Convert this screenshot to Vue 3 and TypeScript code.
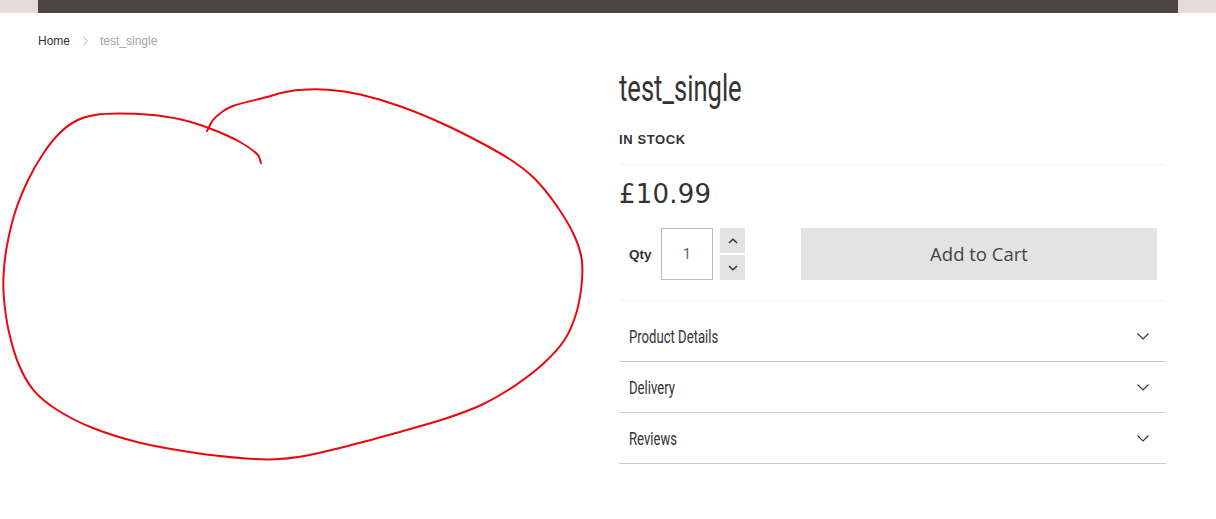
<script setup lang="ts">
type Pt = [number, number];

const accordion = ['Product Details', 'Delivery', 'Reviews'];

// hand-drawn circle, traced from the picture
const scribble: Pt[] = [
  [261, 163], [258, 155], [240, 142], [210, 127], [180, 118], [150, 114], [117, 113], [93, 114],
  [77, 119], [60, 130], [43, 152], [27, 180], [13, 213], [5, 250], [3, 280], [3, 293], [7, 330],
  [17, 367], [33, 392], [50, 408], [93, 430], [133, 443], [200, 455], [250, 459], [273, 460],
  [300, 458], [333, 450], [400, 432], [450, 418], [483, 406], [513, 388], [547, 363], [567, 340],
  [578, 315], [583, 280], [583, 257], [577, 238], [557, 203], [533, 175], [517, 163], [483, 143],
  [443, 123], [400, 105], [357, 92], [327, 89], [300, 89], [283, 92], [267, 97], [233, 106],
  [222, 112], [213, 120], [207, 131],
];

// evens out the jitter of the traced points, the two hook ends stay as they are
const relax = (pts: Pt[]): Pt[] =>
  pts.map((p, i) => {
    if (i < 3 || i > pts.length - 6) return p;
    const a = pts[i - 1];
    const b = pts[i + 1];
    return [(a[0] + 2 * p[0] + b[0]) / 4, (a[1] + 2 * p[1] + b[1]) / 4];
  });

// tangents from the neighbours, handles scaled to each segment's length
const tangent = (pts: Pt[], i: number): Pt => {
  const a = pts[Math.max(i - 1, 0)];
  const b = pts[Math.min(i + 1, pts.length - 1)];
  const len = Math.hypot(b[0] - a[0], b[1] - a[1]) || 1;
  return [(b[0] - a[0]) / len, (b[1] - a[1]) / len];
};

const smooth = (pts: Pt[]) => {
  let d = `M${pts[0][0]} ${pts[0][1]}`;
  for (let i = 0; i < pts.length - 1; i++) {
    const b = pts[i];
    const c = pts[i + 1];
    const h = Math.hypot(c[0] - b[0], c[1] - b[1]) / 3;
    const t1 = tangent(pts, i);
    const t2 = tangent(pts, i + 1);
    d += ` C${(b[0] + t1[0] * h).toFixed(1)} ${(b[1] + t1[1] * h).toFixed(1)} ${(c[0] - t2[0] * h).toFixed(1)} ${(c[1] - t2[1] * h).toFixed(1)} ${c[0].toFixed(1)} ${c[1].toFixed(1)}`;
  }
  return d;
};

const scribblePath = smooth(relax(scribble));
</script>

<template>
  <div class="page">
    <div class="topbar"><div class="topbar__inner"></div></div>

    <nav class="crumbs">
      <a class="crumbs__link">Home</a>
      <svg class="crumbs__sep" width="7" height="10" viewBox="0 0 7 10">
        <path d="M1.5 1 L5.5 5 L1.5 9" fill="none" stroke="#a8a8a8" stroke-width="1" />
      </svg>
      <span class="crumbs__current">test_single</span>
    </nav>

    <main class="product">
      <div class="gallery">
        <svg class="gallery__drawing" width="619" height="470" viewBox="0 60 619 470">
          <path :d="scribblePath" fill="none" stroke="#e8080e" stroke-width="2" stroke-linecap="round" stroke-linejoin="round" />
        </svg>
      </div>

      <section class="info">
        <h1 class="info__title"><span class="info__title-text">test_single</span></h1>
        <div class="info__stock">IN STOCK</div>
        <div class="info__price">£10.99</div>

        <div class="buy">
          <label class="buy__label">Qty</label>
          <div class="buy__input">1</div>
          <div class="stepper">
            <button class="stepper__btn">
              <svg width="10" height="6" viewBox="0 0 10 6"><path d="M1 5 L5 1.2 L9 5" fill="none" stroke="#333" stroke-width="1.5" /></svg>
            </button>
            <button class="stepper__btn">
              <svg width="10" height="6" viewBox="0 0 10 6"><path d="M1 1 L5 4.8 L9 1" fill="none" stroke="#333" stroke-width="1.5" /></svg>
            </button>
          </div>
          <button class="buy__cart">Add to Cart</button>
        </div>

        <div class="accordion">
          <div v-for="item in accordion" :key="item" class="accordion__row">
            <span class="accordion__label">{{ item }}</span>
            <svg width="12" height="7" viewBox="0 0 12 7"><path d="M0.5 0.5 L6 6 L11.5 0.5" fill="none" stroke="#333" stroke-width="1.1" /></svg>
          </div>
        </div>
      </section>
    </main>
  </div>
</template>

<style scoped>
.page {
  width: 1216px;
  height: 519px;
  overflow: hidden;
  background: #fff;
  font-family: "Liberation Sans", Arial, sans-serif;
  color: #333;
}

.topbar {
  background: #e5dcd8;
  padding: 0 38px;
}

.topbar__inner {
  height: 13px;
  background: #4c4343;
}

.crumbs {
  display: flex;
  align-items: center;
  height: 14px;
  margin-top: 21px;
  padding-left: 38px;
  font-size: 12px;
}

.crumbs__link {
  color: #333;
}

.crumbs__sep {
  margin: 0 11px 0 12px;
}

.crumbs__current {
  color: #a3a3a8;
}

.product {
  display: flex;
  margin-top: 12px;
}

.gallery {
  flex: 0 0 619px;
  height: 470px;
}

.gallery__drawing {
  display: block;
}

.info {
  flex: 0 0 547px;
}

/* Oswald isn't installed, so the condensed headings are squeezed horizontally */
.info__title {
  margin: 0;
  padding-top: 6px;
  height: 46px;
  font-size: 36px;
  line-height: 46px;
  font-weight: 400;
  color: #333;
}

.info__title-text {
  display: inline-block;
  font-family: Roboto, "Liberation Sans", sans-serif;
  font-weight: 400;
  transform: scaleX(0.71);
  transform-origin: left center;
}

.info__stock {
  margin-top: 20px;
  padding-bottom: 16px;
  border-bottom: 1px solid #f3f3f3;
  font-size: 13px;
  line-height: 16px;
  font-weight: 700;
  letter-spacing: 0.6px;
  color: #333;
}

.info__price {
  margin-top: 12px;
  height: 36px;
  font-family: "DejaVu Sans", sans-serif;
  font-size: 26px;
  line-height: 34px;
  letter-spacing: 0.2px;
  color: #333;
}

.buy {
  display: flex;
  align-items: center;
  margin-top: 15px;
  padding-left: 10px;
  padding-bottom: 20px;
  border-bottom: 1px solid #f3f3f3;
}

.buy__label {
  width: 32px;
  font-size: 13.5px;
  font-weight: 700;
}

.buy__input {
  box-sizing: border-box;
  display: flex;
  align-items: center;
  justify-content: center;
  width: 52px;
  height: 52px;
  border: 1px solid #bbb;
  font-family: Roboto, sans-serif;
  font-size: 14px;
  color: #666;
}

.stepper {
  display: flex;
  flex-direction: column;
  gap: 2px;
  margin-left: 7px;
}

.stepper__btn {
  display: flex;
  align-items: center;
  justify-content: center;
  width: 25px;
  height: 25px;
  padding: 0;
  border: none;
  background: #e3e3e3;
}

.buy__cart {
  width: 356px;
  height: 52px;
  margin-left: 56px;
  padding: 0 0 2px;
  border: none;
  background: #e3e3e3;
  font-family: "Open Sans", sans-serif;
  font-size: 18.5px;
  font-weight: 500;
  color: #444;
}

.accordion {
  margin-top: 10px;
}

.accordion__row {
  box-sizing: border-box;
  display: flex;
  align-items: center;
  justify-content: space-between;
  height: 51px;
  padding: 0 17px 0 10px;
  border-bottom: 1px solid #ccc;
}

.accordion__label {
  display: inline-block;
  font-family: Roboto, "Liberation Sans", sans-serif;
  font-size: 19px;
  transform: scaleX(0.69);
  transform-origin: left center;
  color: #333;
}
</style>

<style>
body {
  margin: 0;
}
</style>
